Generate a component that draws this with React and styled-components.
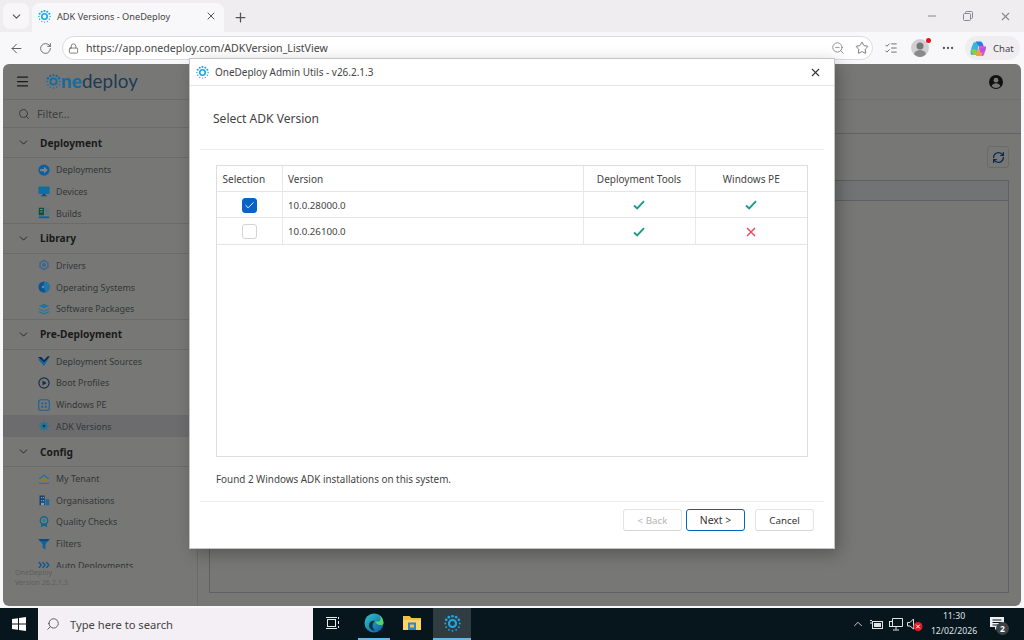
import React from 'react';
import styled, { createGlobalStyle } from 'styled-components';
import { X, Plus, ChevronDown, ChevronUp, ArrowLeft, RotateCw, Lock, ZoomOut, Star, ListChecks, Ellipsis, Menu, Search, RefreshCw, Check } from 'lucide-react';

const GlobalStyle = createGlobalStyle`
  html, body { margin: 0; padding: 0; background: #f7f5f7; }
  body { font-family: "Noto Sans", "Open Sans", sans-serif; }
  * { box-sizing: border-box; }
`;

// --- Layout ---
const Screen = styled.div`
  position: relative;
  width: 1024px;
  height: 640px;
  overflow: hidden;
  display: flex;
  flex-direction: column;
  background: #f8f7f9;
`;

// --- Browser chrome ---
const TabStrip = styled.div`
  height: 32px;
  background: #f0edf1;
  display: flex;
  align-items: flex-end;
  padding-left: 3px;
  color: #555;
`;

const TabMenu = styled.div`
  width: 26px;
  height: 26px;
  margin-bottom: 3px;
  border-radius: 7px;
  background: #f8f6f9;
  display: flex;
  align-items: center;
  justify-content: center;
`;

const Tab = styled.div`
  width: 192px;
  height: 29px;
  margin-left: 3px;
  padding: 0 7px 3px 6px;
  border-radius: 8px 8px 0 0;
  background: #f8f7f9;
  display: flex;
  align-items: center;
  gap: 6px;
`;

const TabTitle = styled.span`
  flex: 1;
  font-size: 9.2px;
  color: #444;
  white-space: nowrap;
`;

const NewTab = styled.div`
  width: 32px;
  height: 29px;
  display: flex;
  align-items: center;
  justify-content: center;
`;

const WindowControls = styled.div`
  margin-left: auto;
  height: 32px;
  display: flex;
  align-items: center;
  gap: 26px;
  padding: 0 12px 0 0;
  color: #8a888c;
`;

const Toolbar = styled.div`
  height: 32px;
  display: flex;
  align-items: center;
  padding: 0 4px 0 9px;
  color: #555;
`;

const NavButton = styled.div`
  width: ${p => p.$w || 29}px;
  margin-left: ${p => p.$ml || 0}px;
  display: flex;
  justify-content: center;
  position: relative;
`;

const Address = styled.div`
  width: 811px;
  height: 24px;
  margin-left: 10px;
  padding: 0 0 0 5px;
  border: 1px solid #dcdadd;
  border-radius: 12px;
  background: #fff;
  display: flex;
  align-items: center;
  gap: 7px;
`;

const Url = styled.span`
  flex: 1;
  font-size: 10.6px;
  color: #444;
`;

const ProfileDot = styled.span`
  position: absolute;
  top: -1px;
  right: 0;
  width: 5px;
  height: 5px;
  border-radius: 50%;
  background: #e81123;
`;

const ChatPill = styled.div`
  width: 55px;
  height: 24px;
  padding-left: 5px;
  border-radius: 12px;
  background: #f0edf1;
  display: flex;
  align-items: center;
  gap: 6px;
  font-size: 9.5px;
  color: #444;
`;

// --- App behind the dialog, painted in its dimmed colours ---
const Workspace = styled.div`
  height: 544px;
  padding: 0 3px 2px;
`;

const AppPanel = styled.div`
  height: 100%;
  border-radius: 6px;
  overflow: hidden;
  background: #777876;
  display: flex;
`;

const Sidebar = styled.aside`
  width: 195px;
  display: flex;
  flex-direction: column;
  border-right: 1px solid #6a6b6b;
`;

const Brand = styled.div`
  height: 36px;
  padding-left: 12px;
  display: flex;
  align-items: center;
  color: #1a1a1a;
  border-bottom: 1px solid #6a6b6b;
`;

const Wordmark = styled.div`
  margin-left: 16px;
  display: flex;
  align-items: center;
  font-family: Lato, sans-serif;
  font-size: 18.8px;
  line-height: 1;
  letter-spacing: 0.1px;
`;

const WordBold = styled.span`
  font-weight: 900;
  color: #1a6a9a;
`;

const WordLight = styled.span`
  font-weight: 400;
  color: #1c3a55;
`;

const FilterRow = styled.div`
  height: 28.4px;
  padding-left: 15px;
  display: flex;
  align-items: center;
  gap: 7px;
  font-size: 10.8px;
  color: #3c3d3d;
  border-bottom: 1px solid #6a6b6b;
`;

const NavScroll = styled.nav`
  flex: 1;
  overflow: hidden;
`;

const SectionHead = styled.div`
  height: 29.7px;
  padding-left: 14px;
  display: flex;
  align-items: center;
  gap: 10px;
  font-size: 10.2px;
  font-weight: 700;
  color: #1a1a1a;
  border-bottom: 1px solid #6a6b6b;
`;

const SectionBody = styled.div`
  border-bottom: 1px solid #6a6b6b;
`;

const NavRow = styled.div`
  height: 21.7px;
  padding: 1.5px 0 0 35px;
  display: flex;
  align-items: center;
  gap: 6px;
  font-size: 8.9px;
  color: #333638;
  background: ${p => (p.$active ? '#6c6c6e' : 'transparent')};
`;

const NavIcon = styled.svg`
  flex: none;
  filter: brightness(0.72);
`;

const SideFooter = styled.div`
  height: 38px;
  padding: 0 0 0 12px;
  font-size: 7.1px;
  line-height: 9.5px;
  color: #5c5d5d;
`;

const Main = styled.main`
  flex: 1;
  display: flex;
  flex-direction: column;
`;

const MainTop = styled.div`
  height: 36px;
  padding-right: 18px;
  display: flex;
  align-items: center;
  justify-content: flex-end;
  border-bottom: 1px solid #6f7071;
`;

const MainTabs = styled.div`
  height: 34px;
  border-bottom: 1px solid #616366;
`;

const MainActions = styled.div`
  height: 46px;
  padding: 12px 12px 0 0;
  display: flex;
  justify-content: flex-end;
`;

const RefreshButton = styled.div`
  width: 22px;
  height: 22px;
  border: 1px solid #686a6b;
  border-radius: 3px;
  display: flex;
  align-items: center;
  justify-content: center;
  color: #0a2a4f;
`;

const GridBox = styled.div`
  height: 413px;
  margin: 0 12px 0 11px;
  border: 1px solid #5d6064;
`;

const GridHead = styled.div`
  height: 20px;
  background: #727374;
  border-bottom: 1px solid #5d6064;
`;

// --- Dialog ---
const Dialog = styled.div`
  position: absolute;
  left: 190px;
  top: 59px;
  width: 644px;
  height: 489px;
  background: #fff;
  box-shadow: 0 0 0 1px #c4c4c4, 4px 5px 16px rgba(0, 0, 0, 0.3);
  display: flex;
  flex-direction: column;
`;

const DialogBar = styled.div`
  height: 26px;
  padding: 0 12px 0 6px;
  display: flex;
  align-items: center;
  gap: 6px;
  font-size: 9.96px;
  color: #444;
`;

const DialogTitle = styled.span`
  flex: 1;
`;

const DialogBody = styled.div`
  flex: 1;
  display: flex;
  flex-direction: column;
  border-top: 1px solid #e6e6e6;
  padding: 0 10px;
`;

const Heading = styled.h1`
  margin: 0;
  height: 64px;
  padding: 25px 0 0 13px;
  font-size: 12.05px;
  line-height: 16px;
  font-weight: 400;
  color: #444;
  border-bottom: 1px solid #eee;
`;

const TableBox = styled.div`
  flex: 1;
  margin: 15px 16px 0;
  border: 1px solid #ddd;
`;

const Table = styled.table`
  width: 100%;
  border-collapse: collapse;
  table-layout: fixed;
  font-size: 9.7px;
  color: #444;
`;

const Th = styled.th`
  height: 25px;
  width: ${p => p.$w ? `${p.$w}px` : 'auto'};
  padding: 1.5px 5.5px 0;
  font-size: 10px;
  font-weight: 400;
  text-align: ${p => p.$left ? 'left' : 'center'};
  border-right: 1px solid #e6e6e6;
  border-bottom: 1px solid #e6e6e6;
  &:last-child { border-right: 0; }
`;

const Td = styled.td`
  height: 26.5px;
  padding: 1.5px 5.5px 0;
  text-align: ${p => p.$left ? 'left' : 'center'};
  border-right: 1px solid #e9e9e9;
  border-bottom: 1px solid #e6e6e6;
  &:last-child { border-right: 0; }
  svg { display: block; margin: 0 auto; }
`;

const CheckBox = styled.span`
  display: flex;
  align-items: center;
  justify-content: center;
  width: 15px;
  height: 15px;
  margin: 0 auto;
  border-radius: 3px;
  color: #fff;
  background: ${p => (p.$on ? '#0a62c4' : '#fff')};
  border: 1px solid ${p => (p.$on ? '#0a62c4' : '#d4d4d4')};
`;

const Status = styled.div`
  height: 45px;
  padding: 15px 0 0 16px;
  font-size: 9.87px;
  line-height: 14px;
  color: #444;
  border-bottom: 1px solid #eee;
`;

const ButtonRow = styled.div`
  height: 46px;
  padding: 7px 10px 0 0;
  display: flex;
  justify-content: flex-end;
`;

const Button = styled.div`
  width: 59px;
  height: 22px;
  margin-left: ${p => p.$gap || 0}px;
  display: flex;
  align-items: center;
  justify-content: center;
  border-radius: 3px;
  font-size: ${p => (p.$primary ? 10.4 : 9.8)}px;
  color: ${p => (p.$disabled ? '#b5b5b5' : '#333')};
  border: ${p => (p.$primary ? '1.5px solid #0a62c4' : '1px solid #e4e4e4')};
  ${p => !p.$primary && 'border-bottom-color: #d6d6d6;'}
`;

// --- Taskbar ---
const Taskbar = styled.footer`
  height: 32px;
  background: #07161d;
  display: flex;
  align-items: center;
  color: #e8ecee;
`;

const StartButton = styled.div`
  width: 38px;
  display: flex;
  justify-content: center;
`;

const SearchBox = styled.div`
  width: 275px;
  height: 32px;
  padding-left: 8px;
  background: #f3eff4;
  display: flex;
  align-items: center;
  gap: 10px;
  font-size: 11.2px;
  color: #444;
`;

const FlippedSearch = styled(Search)`
  transform: scaleX(-1);
`;

const TaskButton = styled.div`
  width: ${p => p.$w || 39}px;
  height: 32px;
  margin-right: ${p => p.$mr || 0}px;
  display: flex;
  align-items: center;
  justify-content: center;
  background: ${p => (p.$active ? '#2f3d43' : 'transparent')};
  border-bottom: 2px solid ${p => (p.$open ? '#6cb6e6' : 'transparent')};
`;

const Tray = styled.div`
  margin-left: auto;
  display: flex;
  align-items: center;
  height: 32px;
  color: #dfe3e5;
`;

const TrayIcon = styled.div`
  width: ${p => p.$w || 19}px;
  display: flex;
  justify-content: center;
  position: relative;
`;

const Clock = styled.div`
  width: 54px;
  margin-left: 3px;
  text-align: center;
  font-size: 8.7px;
  line-height: 15px;
`;

const Notify = styled.div`
  width: 43px;
  height: 32px;
  padding: 6px 0 0 8px;
  position: relative;
`;

const NotifyBadge = styled.span`
  position: absolute;
  left: 15px;
  top: 14px;
  width: 13px;
  height: 13px;
  border-radius: 50%;
  background: #3b4347;
  color: #fff;
  font-size: 8.5px;
  font-weight: 700;
  line-height: 13px;
  text-align: center;
`;

// --- Drawn icons ---
const RingLogo = ({ size = 14, color = '#1ea7e6' }) => {
  const dots = Array.from({ length: 12 }, (_, i) => i * 30);
  return (
    <svg width={size} height={size} viewBox="0 0 24 24">
      <circle cx="12" cy="12" r="5" fill="none" stroke={color} strokeWidth="3" />
      {dots.map(a => (
        <circle
          key={a}
          cx={12 + 10.3 * Math.cos((a * Math.PI) / 180)}
          cy={12 + 10.3 * Math.sin((a * Math.PI) / 180)}
          r={a > 200 && a < 340 ? 1.9 : 1.3}
          fill={color}
        />
      ))}
    </svg>
  );
};

const Ico = ({ children }) => (
  <NavIcon width="12" height="12" viewBox="0 0 16 16">{children}</NavIcon>
);

const icons = {
  deployments: <Ico><circle cx="8" cy="8" r="7.500" fill="#1584d8" /><path d="M3 6.500h5V3.500L13 8l-5 4.500V9.500H3z" fill="#b8b8b8" /></Ico>,
  devices: <Ico><rect x="0.500" y="2" width="15" height="10" rx="1" fill="#159ae0" /><path d="M6 12h4v2h2v1H4v-1h2z" fill="#1d6b9c" /></Ico>,
  builds: <Ico><rect x="1" y="1" width="7" height="10" fill="#1b6e58" /><path d="M3 3h3v1H3zm0 3h3v1H3z" fill="#bff5d8" /><path d="M9.500 2H15v1.500H9.500zm0 3H15v1.500H9.500zm0 3H15v1.500H9.500z" fill="#7d9fc0" /><rect x="1" y="12.500" width="14" height="2.500" fill="#1584d8" /></Ico>,
  drivers: <Ico><path d="M8 .8l6.300 3.600v7.200L8 15.200 1.700 11.600V4.400z" fill="#5d8fc0" /><circle cx="8" cy="8" r="3.600" fill="none" stroke="#a8a8a8" strokeWidth="1.400" /></Ico>,
  os: <Ico><circle cx="8" cy="8" r="7.500" fill="#1176c9" /><path d="M8 .5a7.500 7.500 0 0 1 0 15c3-2 1-5-2-7.500C7 5 9 3 8 .5z" fill="#2aa4ea" /><circle cx="6.500" cy="8" r="1.500" fill="#b8b8b8" /></Ico>,
  packages: <Ico><path d="M8 1l7 3-7 3-7-3z" fill="#2f9fd8" /><path d="M1 7.200l7 3 7-3v1.600l-7 3-7-3z" fill="#2f9fd8" /><path d="M1 10.800l7 3 7-3v1.600l-7 3-7-3z" fill="#2f9fd8" /></Ico>,
  sources: <Ico><path d="M0 2.500h4.500L8 6.500 13 1.500h3L8 10.500z" fill="#123a66" /><path d="M0 5.500h4L8 9.500l7-6-7 11z" fill="#1e8ad8" /></Ico>,
  boot: <Ico><circle cx="8" cy="8" r="6.800" fill="none" stroke="#1d3f6e" strokeWidth="1.600" /><path d="M6 4.800L11.500 8 6 11.200z" fill="#1d3f6e" /></Ico>,
  pe: <Ico><rect x="1" y="1" width="14" height="14" rx="3" fill="none" stroke="#2c82d0" strokeWidth="1.500" /><path d="M4.500 4.500h2.500v2.500H4.500zm4.500 0h2.500v2.500H9zM4.500 9h2.500v2.500H4.500zM9 9h2.500v2.500H9z" fill="#2c82d0" /></Ico>,
  adk: <Ico><circle cx="8" cy="8" r="4.500" fill="#2f9fd0" /><path d="M8 .5v15M.5 8h15M2.700 2.700l10.600 10.600M13.300 2.700L2.700 13.300" stroke="#2f9fd0" strokeWidth="1.300" /><circle cx="8" cy="8" r="1.800" fill="#13577c" /></Ico>,
  tenant: <Ico><path d="M8 1.500L15.500 8H13L8 4 3 8H.5z" fill="#2a9fe0" /><path d="M5 8l3-2.500L11 8v3H5z" fill="#e0a71e" /><rect x="1" y="13" width="14" height="1.500" fill="#2a9fe0" /></Ico>,
  orgs: <Ico><path d="M2 2h7v13H2z" fill="#2158a8" /><path d="M10 7h5v8h-5z" fill="#2a90d8" /><path d="M4 4h1.500v1.500H4zm2.500 0H8v1.500H6.500zM4 8h1.500v1.500H4zm2.500 0H8v1.500H6.500zM4 11.500h4V15H4z" fill="#bcd7f2" /></Ico>,
  quality: <Ico><circle cx="8" cy="6" r="5" fill="none" stroke="#1e8ac8" strokeWidth="1.800" /><circle cx="8" cy="6" r="2" fill="#25c0a8" /><path d="M4.500 10l-1 5 4.500-2 4.500 2-1-5z" fill="#1e8ac8" /></Ico>,
  filters: <Ico><path d="M.5 1.500h15L10 8v7.500L6 12.500V8z" fill="#1a86d8" /><path d="M.5 1.500h15l-2 2.300h-11z" fill="#115a9c" /></Ico>,
  auto: <Ico><path d="M1 4l3.500 4L1 12M6 4l3.500 4L6 12M11 4l3.500 4L11 12" fill="none" stroke="#1678c8" strokeWidth="1.800" /></Ico>,
};

const TealCheck = () => (
  <svg width="12" height="10" viewBox="0 0 12 10"><path d="M1 5.500l3.200 3L11 1.200" fill="none" stroke="#1b9a8a" strokeWidth="1.900" /></svg>
);

const RedCross = () => (
  <svg width="10" height="10" viewBox="0 0 10 10"><path d="M1 1l8 8M9 1L1 9" fill="none" stroke="#ea4a62" strokeWidth="1.500" /></svg>
);

const AccountIcon = () => (
  <svg width="14" height="14" viewBox="0 0 14 14">
    <circle cx="7" cy="7" r="7" fill="#111" />
    <circle cx="7" cy="5.200" r="2.400" fill="#777876" />
    <path d="M2.600 11c.8-1.800 2.500-2.700 4.400-2.700s3.600.9 4.400 2.700C10.300 12.300 8.700 13 7 13s-3.300-.7-4.400-2z" fill="#777876" />
  </svg>
);

const CopilotLogo = () => (
  <svg width="17" height="17" viewBox="0 0 18 18">
    <path d="M5 2.500h5L7.500 13c-.5 2-1.500 3-3.500 3L1 15.500C0 13 1 9 3 4.500 3.500 3 4 2.500 5 2.500z" fill="#35b8d8" />
    <path d="M1 10h5l1.500 6H3.500z" fill="#8fce3c" />
    <path d="M6 1.500h5c1.500 0 2 1 2.500 2.500L15 8l-5-.500z" fill="#2a7ae0" />
    <path d="M10 6l7 1-2 8c-.5 1.500-1.500 2-3 2H7z" fill="#d65ad8" />
    <path d="M7 11l5-1 .5 7H6.500z" fill="#f2a03c" />
    <path d="M11 9l6-1.500-1 5-5.500.5z" fill="#c04fe0" />
  </svg>
);

const EdgeLogo = () => (
  <svg width="20" height="20" viewBox="0 0 20 20">
    <defs>
      <linearGradient id="edgeA" x1="0" y1="0" x2="1" y2="1">
        <stop offset="0" stopColor="#2fc4c8" />
        <stop offset="1" stopColor="#0c59a4" />
      </linearGradient>
    </defs>
    <circle cx="10" cy="10" r="9.500" fill="url(#edgeA)" />
    <path d="M19.500 10c0-5-4-9.500-9.500-9.500 4 0 7 2.500 6.500 6C16 9 12 9 11 8c1 3 3.500 5 8 3.500z" fill="#53d66a" />
    <path d="M11 8c-3-1-6 1-6 4.500 0 3 3 5.500 6.500 5-3-1-4.500-6-.5-9.500z" fill="#07161d" opacity="0.75" />
  </svg>
);

const FolderLogo = () => (
  <svg width="18" height="16" viewBox="0 0 18 16">
    <path d="M0 1h6.500l2 2H18v12H0z" fill="#f3bf45" />
    <path d="M0 5h18v10H0z" fill="#fbd568" />
    <rect x="5" y="7.500" width="8" height="7.500" fill="#2f86c8" />
    <rect x="7" y="9.500" width="4" height="3" fill="#f3bf45" />
  </svg>
);

const WindowsLogo = () => (
  <svg width="14" height="14" viewBox="0 0 14 14" fill="#fff">
    <path d="M0 2l6-.8V6.600H0zM7 1l7-1v6.600H7zM0 7.400h6v5.400l-6-.8zM7 7.400h7V14l-7-1z" />
  </svg>
);

const ProfileIcon = () => (
  <svg width="18" height="18" viewBox="0 0 18 18">
    <circle cx="9" cy="9" r="9" fill="#d0cfd1" />
    <circle cx="9" cy="7" r="3.500" fill="#777" />
    <path d="M3 15c1-3 3.500-4 6-4s5 1 6 4c-1.500 2-4 3-6 3s-4.500-1-6-3z" fill="#8a8a8a" />
  </svg>
);

const RestoreIcon = () => (
  <svg width="10" height="10" viewBox="0 0 10 10" fill="none" stroke="currentColor">
    <rect x="0.500" y="2.500" width="7" height="7" rx="1" />
    <path d="M2.500 2.500V1.500a1 1 0 0 1 1-1h5a1 1 0 0 1 1 1v5a1 1 0 0 1-1 1h-1" />
  </svg>
);

const TaskViewIcon = () => (
  <svg width="14" height="14" viewBox="0 0 14 14" fill="none" stroke="#e8ecee" strokeWidth="1">
    <rect x="1.500" y="3.500" width="8" height="7" />
    <path d="M0 1.500h11M0 12.500h11M12.500 1v2M12.500 5v3M12.500 10v2" />
  </svg>
);

const BatteryIcon = () => (
  <svg width="15" height="11" viewBox="0 0 15 11" fill="none" stroke="#dfe3e5">
    <rect x="3.500" y="2.500" width="10" height="7" />
    <rect x="5" y="4" width="7" height="4" fill="#dfe3e5" stroke="none" />
    <path d="M1 1.500h2M1 4h2" />
  </svg>
);

const NetworkIcon = () => (
  <svg width="14" height="13" viewBox="0 0 14 13" fill="none" stroke="#dfe3e5">
    <path d="M3.500 3.500V.5h10v8h-10M7 8.500v3M4 12h6" />
    <rect x="0.500" y="3.500" width="3" height="5" />
  </svg>
);

const MutedIcon = () => (
  <svg width="16" height="13" viewBox="0 0 16 13">
    <path d="M.5 4.500h2.500L6.500 1v10L3 8H.5z" fill="none" stroke="#dfe3e5" />
    <circle cx="11" cy="8.500" r="4.500" fill="#e01b24" />
    <path d="M9.200 6.700l3.600 3.600M12.800 6.700l-3.600 3.600" stroke="#fff" strokeWidth="1" />
  </svg>
);

const NotifyIcon = () => (
  <svg width="16" height="15" viewBox="0 0 16 15">
    <path d="M1 1h14v10H9l-3 3v-3H1z" fill="#eef0f1" />
    <path d="M3.500 4h9M3.500 6.500h9M3.500 9h6" stroke="#07161d" strokeWidth="1" />
  </svg>
);

const sections = [
  { title: 'Deployment', items: [['Deployments', 'deployments'], ['Devices', 'devices'], ['Builds', 'builds']] },
  { title: 'Library', items: [['Drivers', 'drivers'], ['Operating Systems', 'os'], ['Software Packages', 'packages']] },
  { title: 'Pre-Deployment', items: [['Deployment Sources', 'sources'], ['Boot Profiles', 'boot'], ['Windows PE', 'pe'], ['ADK Versions', 'adk']] },
  { title: 'Config', items: [['My Tenant', 'tenant'], ['Organisations', 'orgs'], ['Quality Checks', 'quality'], ['Filters', 'filters'], ['Auto Deployments', 'auto']] },
];

const versions = [
  { version: '10.0.28000.0', selected: true, tools: true, pe: true },
  { version: '10.0.26100.0', selected: false, tools: true, pe: false },
];

const App = () => (
  <Screen>
    <GlobalStyle />
    <TabStrip>
      <TabMenu><ChevronDown size={13} /></TabMenu>
      <Tab>
        <RingLogo size={13} />
        <TabTitle>ADK Versions - OneDeploy</TabTitle>
        <X size={12} />
      </Tab>
      <NewTab><Plus size={15} /></NewTab>
      <WindowControls>
        <svg width="10" height="10" viewBox="0 0 10 10"><path d="M1 5h8" stroke="currentColor" /></svg>
        <RestoreIcon />
        <X size={13} />
      </WindowControls>
    </TabStrip>

    <Toolbar>
      <NavButton $w={15}><ArrowLeft size={15} strokeWidth={1.5} /></NavButton>
      <NavButton $w={14} $ml={14}><RotateCw size={13} strokeWidth={1.5} /></NavButton>
      <Address>
        <Lock size={11} strokeWidth={1.6} />
        <Url>https://app.onedeploy.com/ADKVersion_ListView</Url>
        <ZoomOut size={14} strokeWidth={1.3} color="#777" />
        <NavButton $w={20}><Star size={14} strokeWidth={1.3} /></NavButton>
      </Address>
      <NavButton $w={36}><ListChecks size={14} strokeWidth={1.4} /></NavButton>
      <NavButton $w={22}><ProfileIcon /><ProfileDot /></NavButton>
      <NavButton $w={34}><Ellipsis size={14} /></NavButton>
      <ChatPill><CopilotLogo />Chat</ChatPill>
    </Toolbar>

    <Workspace>
      <AppPanel>
        <Sidebar>
          <Brand>
            <Menu size={15} />
            <Wordmark>
              <RingLogo size={15} color="#1a6a9a" />
              <WordBold>ne</WordBold>
              <WordLight>deploy</WordLight>
            </Wordmark>
          </Brand>
          <FilterRow>
            <Search size={12} />
            Filter...
          </FilterRow>
          <NavScroll>
            {sections.map(section => (
              <React.Fragment key={section.title}>
                <SectionHead>
                  <ChevronDown size={13} strokeWidth={1.6} />
                  {section.title}
                </SectionHead>
                <SectionBody>
                  {section.items.map(([label, icon]) => (
                    <NavRow key={label} $active={label === 'ADK Versions'}>
                      {icons[icon]}
                      {label}
                    </NavRow>
                  ))}
                </SectionBody>
              </React.Fragment>
            ))}
          </NavScroll>
          <SideFooter>
            OneDeploy<br />Version 26.2.1.3
          </SideFooter>
        </Sidebar>
        <Main>
          <MainTop><AccountIcon /></MainTop>
          <MainTabs />
          <MainActions>
            <RefreshButton><RefreshCw size={13} strokeWidth={2.4} /></RefreshButton>
          </MainActions>
          <GridBox><GridHead /></GridBox>
        </Main>
      </AppPanel>
    </Workspace>

    <Taskbar>
      <StartButton><WindowsLogo /></StartButton>
      <SearchBox>
        <FlippedSearch size={14} strokeWidth={1.4} />
        Type here to search
      </SearchBox>
      <TaskButton $w={40} $mr={5}><TaskViewIcon /></TaskButton>
      <TaskButton $w={32} $open><EdgeLogo /></TaskButton>
      <TaskButton $w={43}><FolderLogo /></TaskButton>
      <TaskButton $w={38} $active $open><RingLogo size={17} /></TaskButton>
      <Tray>
        <TrayIcon><ChevronUp size={14} strokeWidth={1.5} /></TrayIcon>
        <TrayIcon><BatteryIcon /></TrayIcon>
        <TrayIcon><NetworkIcon /></TrayIcon>
        <TrayIcon><MutedIcon /></TrayIcon>
        <Clock>11:30<br />12/02/2026</Clock>
        <Notify><NotifyIcon /><NotifyBadge>2</NotifyBadge></Notify>
      </Tray>
    </Taskbar>

    <Dialog>
      <DialogBar>
        <RingLogo size={13} />
        <DialogTitle>OneDeploy Admin Utils - v26.2.1.3</DialogTitle>
        <X size={13} color="#333" />
      </DialogBar>
      <DialogBody>
        <Heading>Select ADK Version</Heading>
        <TableBox>
          <Table>
            <thead>
              <tr>
                <Th $left $w={65}>Selection</Th>
                <Th $left $w={301}>Version</Th>
                <Th $w={112}>Deployment Tools</Th>
                <Th>Windows PE</Th>
              </tr>
            </thead>
            <tbody>
              {versions.map(row => (
                <tr key={row.version}>
                  <Td><CheckBox $on={row.selected}>{row.selected && <Check size={11} strokeWidth={2} />}</CheckBox></Td>
                  <Td $left>{row.version}</Td>
                  <Td>{row.tools ? <TealCheck /> : <RedCross />}</Td>
                  <Td>{row.pe ? <TealCheck /> : <RedCross />}</Td>
                </tr>
              ))}
            </tbody>
          </Table>
        </TableBox>
        <Status>Found 2 Windows ADK installations on this system.</Status>
        <ButtonRow>
          <Button $disabled>&lt; Back</Button>
          <Button $primary $gap={4}>Next &gt;</Button>
          <Button $gap={10}>Cancel</Button>
        </ButtonRow>
      </DialogBody>
    </Dialog>
  </Screen>
);

export default App;
